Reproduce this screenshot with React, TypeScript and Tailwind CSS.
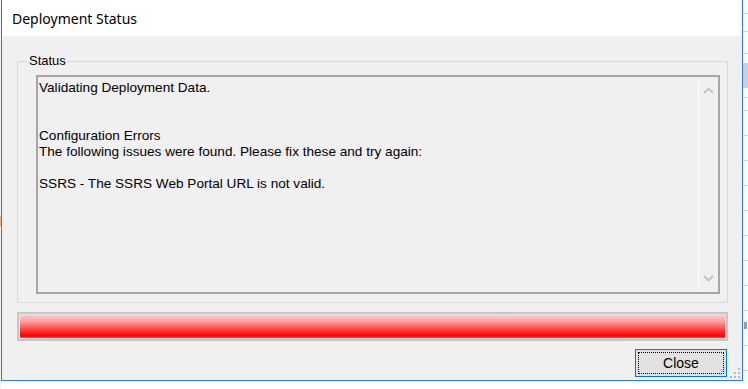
import React from "react";

const bodyFont = { fontFamily: '"Liberation Sans", Arial, sans-serif' };

// lines of the read-only status log, blank strings are empty rows
const logLines = [
  "Validating Deployment Data.",
  "",
  "",
  "Configuration Errors",
  "The following issues were found. Please fix these and try again:",
  "",
  "SSRS - The SSRS Web Portal URL is not valid.",
];

function Chevron({ up }: { up?: boolean }) {
  return (
    <svg width="11" height="7" viewBox="0 0 11 7" className="block">
      <path
        d={up ? "M1 6 L5.5 1.5 L10 6" : "M1 1 L5.5 5.5 L10 1"}
        fill="none"
        stroke="#c2c2c2"
        strokeWidth="1.8"
      />
    </svg>
  );
}

function StatusLog() {
  return (
    <div className="flex h-[219px] w-[684px] border-2 border-[#a6a6a6] bg-[#f0f0f0]">
      <div className="flex-1 pl-[1px] pt-[3px] text-[13.6px] leading-4 text-black">
        {logLines.map((line, i) => (
          <div key={i} className="h-4 whitespace-pre">
            {line}
          </div>
        ))}
      </div>
      <div className="flex w-[20px] flex-col items-center justify-between border-l border-white py-[10px]">
        <Chevron up />
        <Chevron />
      </div>
    </div>
  );
}

function ProgressBar() {
  return (
    <div className="ml-[15px] mr-[14px] mt-[9px] h-[29px] border-2 border-[#c6c6c6] bg-[#e6e6e6] p-[1px]">
      <div className="h-full w-full bg-[linear-gradient(to_bottom,#ffcccc_0%,#ff9a9a_30%,#ff3030_70%,#ff0000_92%,#ff5050_100%)]" />
    </div>
  );
}

function ResizeGrip() {
  const dots = [
    [8, 0],
    [4, 4],
    [8, 4],
    [0, 8],
    [4, 8],
    [8, 8],
  ];
  return (
    <div className="absolute bottom-[2px] right-[2px] h-[10px] w-[10px]">
      {dots.map(([x, y], i) => (
        <span
          key={i}
          className="absolute h-[2px] w-[2px] bg-[#b9b9b9]"
          style={{ left: x, top: y }}
        />
      ))}
    </div>
  );
}

function DeploymentWindow() {
  return (
    <div className="relative flex h-[381px] w-[742px] flex-col border-x border-b border-[#2b7cd3] bg-[#f0f0f0]">
      <div
        className="flex h-[36px] items-center bg-white pl-[10px] text-[14px] text-black"
        style={{ fontFamily: '"Segoe UI", "Noto Sans", sans-serif' }}
      >
        Deployment Status
      </div>

      <div className="flex flex-1 flex-col" style={bodyFont}>
        <div className="relative ml-[15px] mr-[14px] mt-[25px] h-[242px] border border-[#d8d8d8] pl-[18px] pt-[13px]">
          <span className="absolute -top-[9px] left-[9px] bg-[#f0f0f0] px-[2px] text-[13px] leading-4 text-black">
            Status
          </span>
          <StatusLog />
        </div>

        <ProgressBar />

        <div className="mr-[15px] mt-[8px] flex justify-end">
          <button className="h-[28px] w-[92px] border border-[#0078d7] bg-[#e1e1e1] p-[2px]">
            <div className="flex h-full w-full items-center justify-center border border-dotted border-black text-[14px] text-black">
              Close
            </div>
          </button>
        </div>
      </div>

      <ResizeGrip />
    </div>
  );
}

function BackgroundStrip() {
  // the app behind the dialog peeking out at the right edge
  const lines = [13, 31, 53, 97, 110, 135, 160, 185, 210, 235, 260, 285, 310, 345, 370];
  return (
    <div className="relative h-[389px] w-[5px] bg-white">
      {lines.map((y) => (
        <div key={y} className="absolute left-0 h-px w-full bg-[#d4d4d4]" style={{ top: y }} />
      ))}
      <div className="absolute left-0 top-[63px] h-[25px] w-full bg-[#d0d0d0]" />
      <div className="absolute left-[1px] top-[322px] h-[7px] w-[3px] bg-[#9a9a9a]" />
    </div>
  );
}

export default function App() {
  return (
    <div className="flex h-[389px] w-[748px] overflow-hidden bg-white">
      <div className="relative h-full w-[1px] bg-[#f4f4f4]">
        <div className="absolute top-[216px] h-[10px] w-full bg-[#e6b48c]" />
      </div>
      <div className="h-full">
        <DeploymentWindow />
      </div>
      <BackgroundStrip />
    </div>
  );
}
